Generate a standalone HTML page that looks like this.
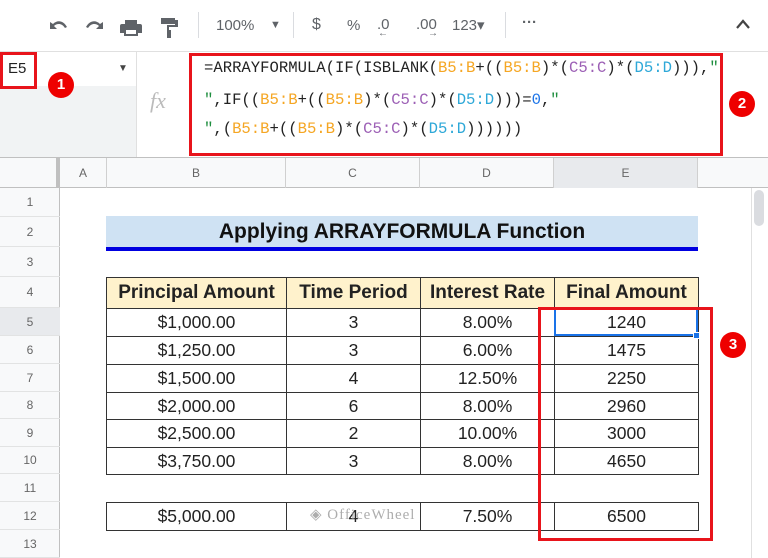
<!DOCTYPE html>
<html><head><style>
*{margin:0;padding:0;box-sizing:border-box}
body{width:768px;height:558px;background:#fff;position:relative;overflow:hidden;font-family:"Liberation Sans",Arial,sans-serif;color:#222}
.a{position:absolute}
.tb{color:#5f6368;font-size:15px}
.sep{position:absolute;top:12px;width:1px;height:26px;background:#dadce0}
.mono{font-family:"Liberation Mono",monospace;font-size:15.6px;color:#222;white-space:pre;letter-spacing:0}
.o{color:#f5a623}.p{color:#9c5fb5}.b{color:#2ea8d8}.g{color:#1e8e3e}.n{color:#1a73e8}
.rh{position:absolute;left:0;width:60px;text-align:center;font-size:12px;color:#666;border-bottom:1px solid #e2e3e3}
.ch{position:absolute;top:158px;height:30px;text-align:center;font-size:12px;color:#666;line-height:30px;border-right:1px solid #d0d0d0}
table{position:absolute;border-collapse:collapse;font-size:17.5px;color:#222}
td{border:1.5px solid #333;text-align:center;padding:0;white-space:nowrap}
.circ{position:absolute;width:26px;height:26px;border-radius:50%;background:#e00;color:#fff;font-size:15px;text-align:center;line-height:26px;font-weight:bold}
.rb{position:absolute;border:3px solid #e8141b}
</style></head><body>
<div class="a" style="left:0;top:0;width:768px;height:52px;background:#fff;border-bottom:1px solid #e0e0e0"></div>
<svg class="a" style="left:45px;top:14px" width="140" height="24" viewBox="0 0 140 24" fill="#5f6368">
<path d="M5 8 L5 15 L12 15 L9 12 C12 9 17 9 20 14 L22 13 C18 6 12 6 8 10 Z"/>
<path d="M58 8 L58 15 L51 15 L54 12 C51 9 46 9 43 14 L41 13 C45 6 51 6 55 10 Z"/>
<path d="M80 6 h12 v4 h-12z M77 10 h18 a2 2 0 0 1 2 2 v7 h-4 v3 h-14 v-3 h-4 v-7 a2 2 0 0 1 2 -2z M81 16 v4 h10 v-4z"/>
<path d="M116 4 h14 v6 h-14z M130 6 h3 v7 h-9 v3 h2 v8 h-4 v-8 h0 v-5 h8 v-3 h-0z"/>
</svg>
<div class="sep" style="left:198px"></div>
<div class="a tb" style="left:216px;top:17px">100%</div>
<div class="a tb" style="left:270px;top:19px;font-size:11px">▼</div>
<div class="sep" style="left:293px"></div>
<div class="a tb" style="left:312px;top:16px;font-size:16px">$</div>
<div class="a tb" style="left:347px;top:17px">%</div>
<div class="a tb" style="left:377px;top:16px">.0</div>
<div class="a tb" style="left:378px;top:28px;font-size:10px">←</div>
<div class="a tb" style="left:416px;top:16px">.00</div>
<div class="a tb" style="left:428px;top:28px;font-size:10px">→</div>
<div class="a tb" style="left:452px;top:16px">123▾</div>
<div class="sep" style="left:505px"></div>
<div class="a tb" style="left:522px;top:14px;font-weight:bold">···</div>
<svg class="a" style="left:735px;top:18px" width="16" height="12"><path d="M2 10 L8 3 L14 10" stroke="#444" stroke-width="2.2" fill="none"/></svg>
<div class="a" style="left:0;top:52px;width:136px;height:34px;background:#fff"></div>
<div class="a" style="left:0;top:86px;width:136px;height:72px;background:#f1f3f4"></div>
<div class="a" style="left:136px;top:52px;width:1px;height:106px;background:#e0e0e0"></div>
<div class="a" style="left:8px;top:60px;font-size:15px;color:#222">E5</div>
<div class="a" style="left:118px;top:63px;font-size:10px;color:#444">▼</div>
<div class="a" style="left:150px;top:88px;font-size:22px;color:#bbb;font-family:'Liberation Serif',serif;font-style:italic">fx</div>
<div class="a mono" style="left:204px;top:59px">=ARRAYFORMULA(IF(ISBLANK(<span class="o">B5:B</span>+((<span class="o">B5:B</span>)*(<span class="p">C5:C</span>)*(<span class="b">D5:D</span>))),<span class="g">"</span></div>
<div class="a mono" style="left:204px;top:91px"><span class="g">"</span>,IF((<span class="o">B5:B</span>+((<span class="o">B5:B</span>)*(<span class="p">C5:C</span>)*(<span class="b">D5:D</span>)))=<span class="n">0</span>,<span class="g">"</span></div>
<div class="a mono" style="left:204px;top:120px"><span class="g">"</span>,(<span class="o">B5:B</span>+((<span class="o">B5:B</span>)*(<span class="p">C5:C</span>)*(<span class="b">D5:D</span>))))))</div>
<div class="a" style="left:0;top:157px;width:768px;height:1px;background:#c0c0c0"></div>
<div class="a" style="left:0;top:158px;width:768px;height:30px;background:#f8f9fa;border-bottom:1px solid #c0c0c0"></div>
<div class="ch" style="left:0;width:60px;border-right:4px solid #c0c0c0"></div>
<div class="ch" style="left:60px;width:47px">A</div>
<div class="ch" style="left:107px;width:179px">B</div>
<div class="ch" style="left:286px;width:134px">C</div>
<div class="ch" style="left:420px;width:134px">D</div>
<div class="ch" style="left:554px;width:144px;background:#e8eaed">E</div>
<div class="a" style="left:0;top:188px;width:60px;height:370px;background:#f8f9fa;border-right:1px solid #c0c0c0"></div>
<div class="rh" style="top:188px;height:29px;line-height:29px">1</div>
<div class="rh" style="top:217px;height:30px;line-height:30px">2</div>
<div class="rh" style="top:247px;height:30px;line-height:30px">3</div>
<div class="rh" style="top:277px;height:31px;line-height:31px">4</div>
<div class="rh" style="top:308px;height:28px;line-height:28px;background:#e8eaed">5</div>
<div class="rh" style="top:336px;height:28px;line-height:28px">6</div>
<div class="rh" style="top:364px;height:28px;line-height:28px">7</div>
<div class="rh" style="top:392px;height:27px;line-height:27px">8</div>
<div class="rh" style="top:419px;height:28px;line-height:28px">9</div>
<div class="rh" style="top:447px;height:27px;line-height:27px">10</div>
<div class="rh" style="top:474px;height:28px;line-height:28px">11</div>
<div class="rh" style="top:502px;height:28px;line-height:28px">12</div>
<div class="rh" style="top:530px;height:28px;line-height:28px">13</div>
<div class="a" style="left:751px;top:188px;width:17px;height:370px;background:#fff;border-left:1px solid #e0e0e0"></div>
<div class="a" style="left:754px;top:190px;width:10px;height:36px;background:#dadce0;border-radius:5px"></div>
<div class="a" style="left:106px;top:216px;width:592px;height:31px;background:#cfe2f3;text-align:center;font-weight:bold;font-size:21px;line-height:31px;color:#111">Applying ARRAYFORMULA Function</div>
<div class="a" style="left:106px;top:247px;width:592px;height:4px;background:#0000e0"></div>
<table style="left:106px;top:277px">
<tr style="height:31px;background:#fff2cc;font-weight:bold;font-size:19px"><td style="width:180px">Principal Amount</td><td style="width:134px">Time Period</td><td style="width:134px">Interest Rate</td><td style="width:144px">Final Amount</td></tr>
<tr style="height:28px"><td>$1,000.00</td><td>3</td><td>8.00%</td><td>1240</td></tr>
<tr style="height:28px"><td>$1,250.00</td><td>3</td><td>6.00%</td><td>1475</td></tr>
<tr style="height:28px"><td>$1,500.00</td><td>4</td><td>12.50%</td><td>2250</td></tr>
<tr style="height:27px"><td>$2,000.00</td><td>6</td><td>8.00%</td><td>2960</td></tr>
<tr style="height:28px"><td>$2,500.00</td><td>2</td><td>10.00%</td><td>3000</td></tr>
<tr style="height:27px"><td>$3,750.00</td><td>3</td><td>8.00%</td><td>4650</td></tr>
</table>
<table style="left:106px;top:502px">
<tr style="height:28px"><td style="width:180px">$5,000.00</td><td style="width:134px">4</td><td style="width:134px">7.50%</td><td style="width:144px">6500</td></tr>
</table>
<div class="a" style="left:554px;top:308px;width:144px;height:28px;border:2px solid #1a73e8"></div>
<div class="a" style="left:693px;top:332px;width:7px;height:7px;background:#1a73e8;border:1px solid #fff"></div>
<div class="a" style="left:310px;top:505px;font-size:15px;color:#999;opacity:0.8;letter-spacing:1px;font-family:'Liberation Serif',serif">◈ OfficeWheel</div>
<div class="rb" style="left:0;top:52px;width:37px;height:37px"></div>
<div class="circ" style="left:48px;top:72px">1</div>
<div class="rb" style="left:189px;top:53px;width:534px;height:103px"></div>
<div class="circ" style="left:729px;top:91px">2</div>
<div class="rb" style="left:538px;top:307px;width:175px;height:234px"></div>
<div class="circ" style="left:720px;top:332px">3</div>
</body></html>
